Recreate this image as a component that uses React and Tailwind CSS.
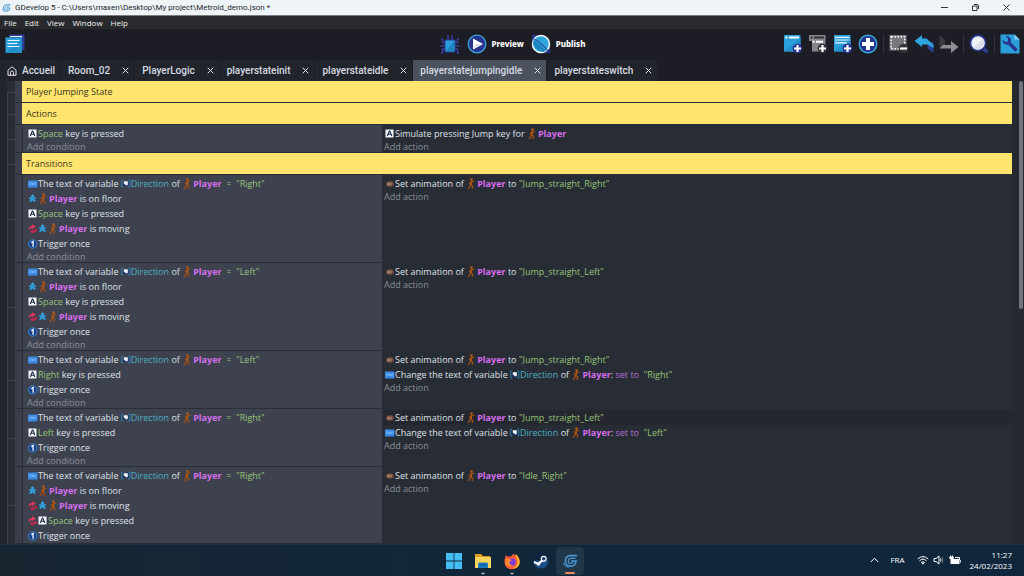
import React from 'react';
import { clsx } from 'clsx';

const tabs = [
  { name: 'Room_02' },
  { name: 'PlayerLogic' },
  { name: 'playerstateinit' },
  { name: 'playerstateidle' },
  { name: 'playerstatejumpingidle', active: true },
  { name: 'playerstateswitch' },
];

const textIs = (value) => ({ type: 'text', value });
const onFloor = { type: 'floor' };
const moving = { type: 'moving' };
const key = (name, inverted) => ({ type: 'key', name, inverted });
const once = { type: 'once' };
const anim = (value) => ({ type: 'anim', value });
const change = (value) => ({ type: 'change', value });

const events = [
  { comment: 'Player Jumping State' },
  { comment: 'Actions' },
  { conditions: [key('Space')], actions: [{ type: 'simulate' }] },
  { comment: 'Transitions' },
  { conditions: [textIs('Right'), onFloor, key('Space'), moving, once], actions: [anim('Jump_straight_Right')] },
  { conditions: [textIs('Left'), onFloor, key('Space'), moving, once], actions: [anim('Jump_straight_Left')] },
  { conditions: [textIs('Left'), key('Right'), once], actions: [anim('Jump_straight_Right'), change('Right')] },
  { conditions: [textIs('Right'), key('Left'), once], actions: [anim('Jump_straight_Left'), change('Left')], hovered: true },
  { conditions: [textIs('Right'), onFloor, moving, key('Space', true), once], actions: [anim('Idle_Right')] },
];

/* ---------- Instruction icons ---------- */

function TextIcon() {
  return (
    <svg viewBox="0 0 10 8" className="w-[10px] h-2 shrink-0">
      <rect y="0.5" width="9.5" height="7" rx="0.5" fill="#3b8be6" />
      <path d="M1.5 2.5l1 2.5 1-2.5M4.2 5l.8-2.3L6 5M7 5V3h1.3" stroke="#8cc4fb" strokeWidth="0.7" fill="none" />
    </svg>
  );
}

function KeyIcon() {
  return (
    <svg viewBox="0 0 9 9" className="w-[9px] h-[9px] mr-px shrink-0">
      <rect x="0.5" y="0.5" width="8" height="8" fill="#f4f6fa" />
      <path d="M2.3 7l2-5h.5l2 5M3 5.2h3" stroke="#1b2c4c" strokeWidth="1.1" fill="none" />
    </svg>
  );
}

function PlatformIcon() {
  return (
    <svg viewBox="0 0 9 9" className="w-[9px] h-[9px] mr-px shrink-0">
      <circle cx="4.5" cy="2" r="1.5" fill="#35a9e8" />
      <path d="M1 3.2h7v1.6H6.3L8 7.8H5.8L4.5 6.2 3.2 7.8H1l1.7-3H1z" fill="#2f9fe0" />
    </svg>
  );
}

function InvertIcon() {
  return (
    <svg viewBox="0 0 10 10" className="w-[10px] h-[10px] shrink-0">
      <path d="M1.5 5.2Q1.5 3 4 2.8" stroke="#e8325c" strokeWidth="1.8" fill="none" />
      <path d="M4 .2L7.8 2.6 4.4 5z" fill="#ee3a62" />
      <path d="M8 5Q8 7.300 5.500 7.500" stroke="#d4234e" strokeWidth="1.8" fill="none" />
      <path d="M5.5 9.900L1.800 7.500 5 5.200z" fill="#c92049" />
    </svg>
  );
}

function OnceIcon() {
  return (
    <svg viewBox="0 0 10 10" className="w-[10px] h-[10px] shrink-0">
      <circle cx="4.8" cy="5" r="4.2" fill="#173f8a" stroke="#3f8fd8" strokeWidth="0.9" />
      <path d="M3.3 3.8L5.1 2.5V7.8" stroke="#fff" strokeWidth="1.3" fill="none" />
    </svg>
  );
}

function AnimIcon() {
  return (
    <svg viewBox="0 0 10 9" className="w-[10px] h-[9px] shrink-0">
      <ellipse cx="5" cy="5" rx="4" ry="2.8" fill="#6e4a3c" />
      <ellipse cx="4.6" cy="5" rx="2.4" ry="1.5" fill="#b58a78" />
      <circle cx="5" cy="5" r="0.9" fill="#7a5546" />
    </svg>
  );
}

function VariableIcon() {
  return (
    <svg viewBox="0 0 10 9" className="w-[10px] h-[9px] shrink-0">
      <path d="M2.2 1H.7v7h1.5M7.3 1h1.500v7H7.300" stroke="#2c7fb0" strokeWidth="1" fill="none" />
      <rect x="2.5" y="2" width="5" height="5" fill="#18386e" />
      <path d="M2.8 2.2h4v3.6L5.500 6.400 2.800 4.500z" fill="#f2f6fb" />
    </svg>
  );
}

function SpriteIcon() {
  return (
    <svg viewBox="0 0 8 12" className="w-2 h-3 ml-px mr-[2px] shrink-0">
      <circle cx="4.5" cy="1.6" r="1.3" fill="#b85a12" />
      <path d="M4.6 2.5L3.6 6.5M4.4 3.6L7.2 3.4M4.2 4L2 5.6M3.7 6.2L5.6 8.2 5.2 11M3.6 6.2L2.6 8.6 1.2 11" stroke="#a34d12" strokeWidth="1.3" fill="none" />
      <path d="M4.9 4.2L4.3 6.4" stroke="#d87a24" strokeWidth="0.6" />
    </svg>
  );
}

/* ---------- Toolbar icons ---------- */

function ProjectIcon() {
  return (
    <svg viewBox="0 0 20 20" className="w-5 h-5">
      <path d="M4 .5h15.5V16H4z" fill="#2f3f94" />
      <path d="M.5 3.5h14.5L17 2v17H.5z" fill="#2a9fd9" />
      <path d="M.5 19L17 5v14z" fill="#2390cb" />
      <path d="M5 2.5h12M2.5 6.5h12M2.5 9.5h10M2.5 12.5h12" stroke="#e4f3fc" strokeWidth="1.2" />
    </svg>
  );
}

function DebugIcon() {
  return (
    <svg viewBox="0 0 20 20" className="w-5 h-5">
      <path d="M8 6V1M12 6V1M5 8.5H2.5V5H1M15 8.5h2.5V5H19M5 12H.5M15 12h4.5M5 15H2.5v4H1M15 15h2.5v4H19" stroke="#3a3f9c" strokeWidth="1.5" fill="none" />
      <path d="M5 6h10v12H5z" fill="#2a9fd9" stroke="#293896" />
      <path d="M5.5 17.5L14.5 6.5v11z" fill="#1d83bd" />
    </svg>
  );
}

function PlayIcon() {
  return (
    <svg viewBox="0 0 20 20" className="w-5 h-5">
      <circle cx="10" cy="10" r="8.8" fill="#26348d" stroke="#3aa7dc" strokeWidth="1.3" />
      <path d="M6 4.5L16 10 6 15.5z" fill="#fff" />
      <path d="M6 15.5L9 10h7z" fill="#dbe0ea" />
    </svg>
  );
}

function PublishIcon() {
  return (
    <svg viewBox="0 0 20 20" className="w-5 h-5">
      <path d="M1 1h6L19 13v6h-6L1 7z" fill="#26348d" />
      <circle cx="10" cy="10" r="8.5" fill="#2fa5dd" stroke="#fff" strokeWidth="1.5" />
      <path d="M2.5 6Q9 9 15 17l-3 1Q4 15 2 10z" fill="#1c86c0" />
      <path d="M2 4.5Q9 7 17 17" stroke="#26549d" strokeWidth="1.3" fill="none" />
    </svg>
  );
}

function AddBadge({ fill = '#26348d', minus }) {
  return (
    <>
      <circle cx="14.5" cy="14.5" r="4.8" fill={fill} />
      <path d={minus ? 'M11 14.5h7' : 'M11 14.5h7M14.5 11v7'} stroke="#fff" strokeWidth="2.2" />
    </>
  );
}

function AddEventIcon() {
  return (
    <svg viewBox="0 0 20 20" className="w-5 h-5">
      <path d="M1 1h16.5v16.5H1z" fill="#2a9fd9" />
      <path d="M1 17.5L17.5 4v13.5z" fill="#2390cb" />
      <path d="M2.5 3.5h2M6 3.5h10" stroke="#fff" strokeWidth="2.2" />
      <AddBadge />
    </svg>
  );
}

function AddSubEventIcon() {
  return (
    <svg viewBox="0 0 20 20" className="w-5 h-5">
      <path d="M1 1h16.5v16.5H4V7H1z" fill="#86878b" />
      <path d="M2.5 3.5h2M6 3.5h10" stroke="#333438" strokeWidth="2.2" />
      <path d="M4.5 7.7h2M8 7.7h7" stroke="#fff" strokeWidth="2" />
      <AddBadge fill="#333336" />
    </svg>
  );
}

function AddCommentIcon() {
  return (
    <svg viewBox="0 0 20 20" className="w-5 h-5">
      <path d="M1 1h16.5v16.5H1z" fill="#2a9fd9" />
      <path d="M1 17.5L17.5 4v13.5z" fill="#2390cb" />
      <path d="M2 3.3h14.5M2 6h14.5M2 8.8h12" stroke="#e9f6ff" strokeWidth="1.2" />
      <AddBadge />
    </svg>
  );
}

function AddCircleIcon() {
  return (
    <svg viewBox="0 0 20 20" className="w-5 h-5">
      <circle cx="10" cy="10" r="8.8" fill="#26348d" stroke="#3aa7dc" strokeWidth="1.4" />
      <path d="M4 10h12M10 4v12" stroke="#fff" strokeWidth="4" />
    </svg>
  );
}

function DeleteIcon() {
  return (
    <svg viewBox="0 0 20 20" className="w-5 h-5">
      <path d="M.5 1h17v15.5H.5z" fill="#77787c" />
      <path d="M2.2 2.7h13.5v12H2.2z" fill="none" stroke="#fff" strokeWidth="1.5" strokeDasharray="1.6 1.5" />
      <path d="M4 4.5h10v9H4z" fill="#77787c" />
      <AddBadge fill="#333336" minus />
    </svg>
  );
}

function UndoIcon() {
  return (
    <svg viewBox="0 0 20 20" className="w-5 h-5">
      <path d="M13.5 8.5L19.5 8v11l-6-4.5z" fill="#2f3f94" />
      <path d="M.5 7L8 1v3.5h4.5L19.5 11v3l-6-3.5H8V13z" fill="#2fa5dd" />
    </svg>
  );
}

function RedoIcon() {
  return (
    <svg viewBox="0 0 20 20" className="w-5 h-5">
      <path d="M.5 1L6 6v7.5H.5z" fill="#3a3a3f" />
      <path d="M.5 14.5L4 11h8V7l7.5 6L12 19v-4.5z" fill="#8d8e91" />
    </svg>
  );
}

function SearchIcon() {
  return (
    <svg viewBox="0 0 20 20" className="w-5 h-5">
      <path d="M13 13l5.5 5.5" stroke="#2f3f94" strokeWidth="3.5" />
      <circle cx="9" cy="9" r="7.6" fill="#eef1f6" stroke="#26348d" strokeWidth="1.7" />
      <path d="M4 14L14.5 5a7 7 0 0 1-10.500 9z" fill="#dadfe8" />
    </svg>
  );
}

function WrenchIcon() {
  return (
    <svg viewBox="0 0 20 20" className="w-5 h-5">
      <path d="M.5 .5h14l5 5v14H.5z" fill="#2a9fd9" />
      <path d="M14.5 .5l5 5h-5z" fill="#8bd0f2" />
      <path d="M8.5 8.5L16.5 16.5" stroke="#26348d" strokeWidth="3.2" />
      <path d="M2.5 5.5L5 8l3-.5L8 4.5 5.5 2.5c3-.8 6 1.500 5.500 5l-3.500 3.200c-3 .3-5.200-2.200-5-5.200z" fill="#26348d" />
    </svg>
  );
}

function GDevelopLogo({ className }) {
  return (
    <svg viewBox="0 0 16 14" className={className} fill="none" stroke="currentColor">
      <path d="M15 1.3H8C4.5 1.3 2.5 3.8 2.5 6.500c0 4 3 6 6 6 3.300 0 5-2.300 5.500-5.500H8.500" strokeWidth="1.7" />
      <path d="M13.500 4.200H8.300c-1.700 0-2.800 1-2.800 2.500 0 1.800 1.300 2.900 3 2.900 1.200 0 2-.6 2.300-1.500M.5 9c1 2.600 3 4.200 6 4.500" strokeWidth="1.2" />
    </svg>
  );
}

/* ---------- Pieces of an instruction ---------- */

function Player({ colon }) {
  return (
    <>
      <SpriteIcon />
      <b className="font-bold text-[#d56fee]">Player</b>
      {colon && <span>:</span>}
    </>
  );
}

function Direction() {
  return (
    <span className="flex items-center text-[#4bb0c4]">
      <VariableIcon />
      Direction
    </span>
  );
}

function Str({ children }) {
  return <span className="text-[#98c379]">"{children}"</span>;
}

function Instruction({ data, hovered }) {
  return (
    <div className={clsx('flex items-center h-[15px] pl-px whitespace-pre', hovered && 'bg-[#24272e]')}>
      {data.type === 'text' && (
        <>
          <TextIcon /><span>The text of variable </span><Direction /><span> of </span><Player />
          <span className="text-[#98c379]">{'  =  '}</span><Str>{data.value}</Str>
        </>
      )}
      {data.type === 'floor' && (
        <>
          <PlatformIcon /><Player /><span> is on floor</span>
        </>
      )}
      {data.type === 'moving' && (
        <>
          <InvertIcon /><PlatformIcon /><Player /><span> is moving</span>
        </>
      )}
      {data.type === 'key' && (
        <>
          {data.inverted && <InvertIcon />}
          <KeyIcon /><span className="text-[#98c379]">{data.name}</span><span> key is pressed</span>
        </>
      )}
      {data.type === 'once' && (
        <>
          <OnceIcon /><span>Trigger once</span>
        </>
      )}
      {data.type === 'simulate' && (
        <>
          <KeyIcon /><span>Simulate pressing Jump key for </span><Player />
        </>
      )}
      {data.type === 'anim' && (
        <>
          <AnimIcon /><span>Set animation of </span><Player /><span> to </span><Str>{data.value}</Str>
        </>
      )}
      {data.type === 'change' && (
        <>
          <TextIcon /><span>Change the text of variable </span><Direction /><span> of </span><Player colon />
          <span className="text-[#b56fd8]"> set to  </span><Str>{data.value}</Str>
        </>
      )}
    </div>
  );
}

function EventRow({ event, first, last }) {
  return (
    <div className="flex shrink-0">
      {/* Tree lines */}
      <div className="w-[7px] bg-[#22252d]"></div>
      <div className="w-2 flex flex-col bg-[#282c34]">
        <div className={clsx('flex-1 border-[#3c404a]', !first && 'border-l')}></div>
        <div className="flex-1 border-l border-t border-[#3c404a]"></div>
      </div>
      <div className="w-[7px] bg-[#3b3f4b] border-b border-[#282c34]"></div>

      {event.comment ? (
        <div className="flex-1 h-[22px] pl-1 flex items-center bg-[#ffe56e] border-b border-[#282c34] text-[#3a3520]">
          {event.comment}
        </div>
      ) : (
        <div className="flex-1 grid grid-cols-11">
          <div className="col-span-4 pt-px pl-1 bg-[#3e424f] border-l border-b border-[#2a2e37] text-[#dfe2e8]">
            {event.conditions.map((c, i) => <Instruction key={i} data={c} />)}
            {!last && <button className="block h-[11px] leading-[11px] text-[#8b8f99]">Add condition</button>}
          </div>
          <div className="col-span-7 pt-px pl-[2px] text-[#dfe2e8]">
            {event.actions.map((a, i) => <Instruction key={i} data={a} hovered={event.hovered && i === 0} />)}
            <button className="block h-[11px] leading-[11px] text-[#8b8f99]">Add action</button>
          </div>
        </div>
      )}
    </div>
  );
}

function Toolbar() {
  return (
    <div className="h-[31px] shrink-0 flex items-center justify-between px-1 pb-px bg-[#1d1d26]">
      <div className="flex-1 pl-px">
        <button aria-label="Project manager" className="block"><ProjectIcon /></button>
      </div>
      <div className="flex items-center text-[8px] font-extrabold text-white font-['Noto_Sans']">
        <button aria-label="Debugger"><DebugIcon /></button>
        <button className="flex items-center gap-[5px] ml-[7px]"><PlayIcon />Preview</button>
        <button className="flex items-center gap-[5px] ml-[7px]"><PublishIcon />Publish</button>
      </div>
      <div className="flex-1 flex items-center justify-end">
        <div className="flex gap-[5px] pr-[5px]">
          <button aria-label="Add event"><AddEventIcon /></button>
          <button aria-label="Add sub-event"><AddSubEventIcon /></button>
          <button aria-label="Add comment"><AddCommentIcon /></button>
          <button aria-label="Add other event"><AddCircleIcon /></button>
        </div>
        <div className="flex gap-[5px] pl-[5px] pr-1 border-l border-[#32323c]">
          <button aria-label="Delete"><DeleteIcon /></button>
          <button aria-label="Undo"><UndoIcon /></button>
          <button aria-label="Redo"><RedoIcon /></button>
        </div>
        <div className="flex px-[5px] border-l border-[#32323c]">
          <button aria-label="Search"><SearchIcon /></button>
        </div>
        <div className="flex pl-[5px] border-l border-[#32323c]">
          <button aria-label="Settings"><WrenchIcon /></button>
        </div>
      </div>
    </div>
  );
}

function TabBar() {
  return (
    <div className="h-[21px] shrink-0 flex bg-[#1d1d26] text-[10px] font-medium text-[#d6dae2] font-['Roboto']">
      <button className="flex items-center gap-[5px] pl-[7px] w-[60px] bg-[#21252b]">
        <svg viewBox="0 0 10 10" className="w-[10px] h-[10px]" fill="none" stroke="#e5e7ec">
          <path d="M1 4.2L5 .8l4 3.4V9.3H1z" />
          <path d="M3.5 9V6.5a1.5 1.5 0 0 1 3 0V9" />
        </svg>
        Accueil
      </button>
      {tabs.map((tab) => (
        <div
          key={tab.name}
          className={clsx('flex items-center pl-[7px] pr-[5px] border-l border-[#1d1d26] whitespace-nowrap', tab.active ? 'bg-[#4b515d]' : 'bg-[#21252b]')}
        >
          <button>{tab.name}</button>
          <button aria-label={'Close ' + tab.name} className="ml-3">
            <svg viewBox="0 0 7 7" className="w-[7px] h-[7px]" stroke="#e5e7ec"><path d="M.7 .7l5.6 5.6M6.3 .7L.7 6.3" /></svg>
          </button>
        </div>
      ))}
    </div>
  );
}

function Taskbar() {
  return (
    <div className="h-8 shrink-0 flex items-center px-3 bg-gradient-to-r from-[#172531] via-[#10273a] to-[#10263c] border-t border-[#1d3343] text-white text-[8px]">
      <div className="flex-1"></div>
      <div className="flex items-center gap-px">
        <button aria-label="Start" className="w-7 h-7 flex justify-center items-center">
          <svg viewBox="0 0 16 16" className="w-4 h-4" fill="#45bdf5"><path d="M0 0h7.6v7.6H0zM8.4 0H16v7.6H8.4zM0 8.4h7.6V16H0zM8.4 8.4H16V16H8.4z" /></svg>
        </button>
        <button aria-label="Files" className="w-7 h-7 flex justify-center items-end">
          <svg viewBox="0 0 18 22" className="w-[18px] h-[22px]">
            <path d="M1 1h6l2 2h7v3H1z" fill="#e09b1d" />
            <path d="M1 4h16v11H1z" fill="#fcd45b" />
            <path d="M4 11q0-1.500 1.500-1.500h7q1.500 0 1.500 1.500v4H4z" fill="#197bc2" />
            <path d="M6 12h6" stroke="#14558f" />
            <path d="M7.5 20.5h3" stroke="#b4bdc7" strokeWidth="1.5" />
          </svg>
        </button>
        <button aria-label="Firefox" className="w-7 h-7 flex justify-center items-end">
          <svg viewBox="0 0 18 22" className="w-[18px] h-[22px]">
            <path d="M2 5l1-3 2 2q2-1 3-.5L10.500 .5l1.500 3 1-2.500Q17 5 16.700 9.500 16 16 9 16.300 2 16 1.500 9.500 1.300 7 2 5z" fill="#ff5a36" />
            <path d="M11 1q4 4 3.500 9-1 5-6 5 7 1.500 8.200-5.500Q16.500 5 13 1.500l-.8 2z" fill="#ffc12e" />
            <circle cx="9" cy="9" r="3.7" fill="#7c41d8" />
            <path d="M2.500 6q3-1 6.500 1L6.500 8.500Q6 12 10 12.500 5 15 2.500 11z" fill="#ff8a2c" />
            <path d="M7.5 20.5h3" stroke="#b4bdc7" strokeWidth="1.5" />
          </svg>
        </button>
        <button aria-label="Steam" className="w-7 h-7 flex justify-center items-center">
          <svg viewBox="0 0 16 16" className="w-4 h-4">
            <circle cx="8" cy="8" r="7.5" fill="#1b4f8c" />
            <path d="M.5 7.500Q1.500 .5 8 .5t7.500 7z" fill="#102240" />
            <path d="M1 9l4.500 2L10 6.500" stroke="#fff" strokeWidth="2.2" fill="none" />
            <circle cx="10.7" cy="5.8" r="2.4" fill="#153d70" stroke="#fff" strokeWidth="1.2" />
            <circle cx="5.5" cy="11" r="1.7" fill="#fff" />
          </svg>
        </button>
        <button aria-label="GDevelop" className="w-7 h-7 rounded-sm bg-[#20374a] flex flex-col items-center justify-end gap-1 pb-px text-[#4795d3]">
          <GDevelopLogo className="w-[15px] h-[14px]" />
          <span className="w-[10px] h-[2px] rounded-full bg-[#f0875a]"></span>
        </button>
      </div>
      <div className="flex-1 flex items-center justify-end pb-px">
        <button aria-label="Hidden icons" className="mr-[11px]">
          <svg viewBox="0 0 9 6" className="w-[9px] h-[6px]" fill="none" stroke="#fff"><path d="M.8 5L4.5 1.2 8.2 5" /></svg>
        </button>
        <span className="mr-3">FRA</span>
        <svg viewBox="0 0 12 10" className="w-3 h-[10px] mr-1" fill="none" stroke="#fff">
          <path d="M.8 4Q6-.8 11.2 4M2.5 5.8Q6 2.5 9.5 5.8M4.2 7.5Q6 6 7.8 7.5" />
          <circle cx="6" cy="8.5" r="0.6" fill="#fff" />
        </svg>
        <svg viewBox="0 0 12 10" className="w-3 h-[10px] mr-1" fill="none" stroke="#fff">
          <path d="M1 3.5h2L6 1v8L3 6.5H1z" />
          <path d="M7.5 3.5q1 1.5 0 3" />
          <path d="M9 2q2.2 3 0 6" opacity="0.4" />
        </svg>
        <svg viewBox="0 0 12 10" className="w-3 h-[10px] mr-[9px]">
          <path d="M1.500 4h9V9h-9z" fill="#fff" />
          <path d="M6 2.500h4.500V5M11.300 5v2.500" stroke="#fff" fill="none" />
          <path d="M1.500 .5v1.500M3.500 .5v1.500M.8 2h3.500v1.500H.8z" stroke="#fff" fill="#fff" />
        </svg>
        <div className="text-right leading-[11px]">
          <div>11:27</div>
          <div>24/02/2023</div>
        </div>
      </div>
    </div>
  );
}

function App() {
  return (
    <div className="h-screen flex flex-col overflow-hidden bg-[#282c34] text-[9px] font-['Open_Sans','Noto_Sans',sans-serif]">
      {/* Title bar */}
      <div className="h-4 shrink-0 flex items-center pl-[2px] bg-[#eff4f9] border-b border-[#7b7d7e] text-[8px] text-[#22252a] whitespace-pre font-['Roboto']">
        <GDevelopLogo className="w-[9px] h-2 mr-1 text-[#2f8fd6]" />
        <span className="flex-1">GDevelop 5 - C:\Users\maxen\Desktop\My project\Metroid_demo.json *</span>
        <button aria-label="Minimize" className="mr-6">
          <svg viewBox="0 0 7 7" className="w-[7px] h-[7px]" stroke="#333"><path d="M0 3.5h7" /></svg>
        </button>
        <button aria-label="Restore" className="mr-6">
          <svg viewBox="0 0 7 7" className="w-[7px] h-[7px]" fill="none" stroke="#333"><path d="M.5 2h4.5v4.5H.5zM2 .5h3q1.500 0 1.500 1.500v3" /></svg>
        </button>
        <button aria-label="Close" className="mr-[14px]">
          <svg viewBox="0 0 7 7" className="w-[7px] h-[7px]" stroke="#333"><path d="M.5 .5l6 6M6.5 .5l-6 6" /></svg>
        </button>
      </div>

      {/* Menu */}
      <div className="h-[13px] shrink-0 flex items-center gap-2 pl-1 bg-[#292a2d] text-[8px] text-[#f0f0f0]">
        <button>File</button>
        <button>Edit</button>
        <button>View</button>
        <button>Window</button>
        <button>Help</button>
      </div>

      <Toolbar />
      <TabBar />

      {/* Events sheet */}
      <div className="flex-1 min-h-0 flex overflow-hidden">
        <div className="flex-1 flex flex-col">
          {events.map((event, i) => (
            <EventRow key={i} event={event} first={i === 0} last={i === events.length - 1} />
          ))}
        </div>
        <div className="w-3 flex justify-end pr-px bg-[#25282f]">
          <div className="w-1 h-[228px] rounded-full bg-[#72757b]"></div>
        </div>
      </div>

      <Taskbar />
    </div>
  );
}

export default App;
